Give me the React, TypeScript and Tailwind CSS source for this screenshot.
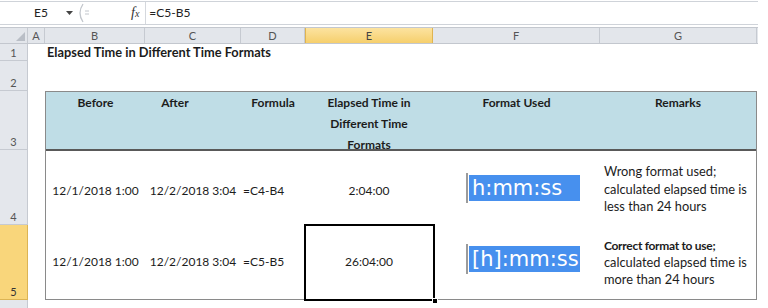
import React from 'react';

const SHEET_COLS = 'grid grid-cols-[28px_17px_100px_96px_64px_128px_167px_157px]';
const TABLE_COLS = 'grid grid-cols-[99px_96px_64px_128px_167px_156px]';

function RowHead({ label, className, active }: { label: string; className: string; active?: boolean }) {
  return (
    <div
      className={`${className} col-start-1 flex items-end justify-center pb-[2px] border-r border-b text-[11px] leading-none ${
        active ? 'bg-[#f9d67b] border-[#dcb454] text-[#333]' : 'bg-[#e4e7ec] border-[#c6cad1] text-[#555]'
      }`}
    >
      {label}
    </div>
  );
}

function FormatChip({ text, shift }: { text: string; shift: string }) {
  return (
    <div className={`flex items-center pl-[33px] ${shift}`}>
      <div className="w-[2px] h-[30px] bg-[#9b9b9b]" />
      <div className="ml-[1px] w-[111px] h-[26px] bg-[#4790ee] flex items-center pl-[3px] text-white text-[21px] leading-none font-['DejaVu_Sans',sans-serif]">
        {text}
      </div>
    </div>
  );
}

export default function App() {
  return (
    <div className="w-[768px] h-[308px] overflow-hidden bg-white font-['Lato',sans-serif] text-[12px] text-[#1c1c1c]">
      {/* Formula bar */}
      <div className="mt-[1px] w-[758px] h-[24px] border-y border-[#cfd3d9] flex items-center">
        <div className="w-[62px] pl-[34px] text-[#222]">E5</div>
        <svg width="7" height="4" className="ml-[4px]">
          <polygon points="0,0 7,0 3.5,4" fill="#444" />
        </svg>
        <svg width="14" height="20" className="ml-[4px]">
          <path d="M6 1 Q0 10 6 19" fill="none" stroke="#c2c6cc" strokeWidth="1.3" />
          <line x1="8" y1="8" x2="12" y2="8" stroke="#c2c6cc" />
          <line x1="8" y1="11" x2="12" y2="11" stroke="#c2c6cc" />
        </svg>
        <span className="ml-[40px] font-['Liberation_Serif',serif] italic text-[14px] text-[#333] leading-none">
          f<span className="text-[10px]">x</span>
        </span>
        <div className="ml-[6px] w-px h-[22px] bg-[#d5d8dd]" />
        <div className="pl-[3px] text-[#222]">=C5-B5</div>
      </div>

      {/* Column headers */}
      <div className={`${SHEET_COLS} mt-[2px] w-[758px] h-[17px] border-y border-[#c3c7ce] bg-[#e3e6eb] text-[11px] text-[#555] leading-[15px]`}>
        <div className="border-r border-[#c6cad1] flex items-end justify-end pr-[2px] pb-[2px]">
          <svg width="9" height="9">
            <polygon points="9,0 9,9 0,9" fill="#b9bec6" />
          </svg>
        </div>
        <div className="border-r border-[#c6cad1] text-center">A</div>
        <div className="border-r border-[#c6cad1] text-center">B</div>
        <div className="border-r border-[#c6cad1] text-center">C</div>
        <div className="border-r border-[#c6cad1] text-center">D</div>
        <div className="border-x border-[#dfb451] bg-linear-to-b from-[#fce3a0] to-[#f6cf6b] text-center text-[#444]">E</div>
        <div className="border-r border-[#c6cad1] text-center">F</div>
        <div className="border-r border-[#c6cad1] text-center">G</div>
      </div>

      {/* Sheet body */}
      <div className={`${SHEET_COLS} grid-rows-[17px_30px_59px_75px_75px_8px] w-[757px]`}>
        <RowHead label="1" className="row-start-1" />
        <RowHead label="2" className="row-start-2" />
        <RowHead label="3" className="row-start-3" />
        <RowHead label="4" className="row-start-4" />
        <RowHead label="5" className="row-start-5" active />
        <div className="row-start-6 col-start-1 bg-[#e4e7ec] border-r border-[#c6cad1]" />

        <div className="row-start-1 col-start-3 col-span-6 flex items-center pl-[2px] font-bold text-[12.8px]">
          Elapsed Time in Different Time Formats
        </div>

        {/* Table */}
        <div className="row-start-3 row-span-3 col-start-3 col-span-6 border border-[#8a8a8a] flex flex-col">
          <div className={`${TABLE_COLS} h-[59px] bg-[#bfdde6] border-b-2 border-[#595959] font-bold leading-[21px] text-center`}>
            <div>Before</div>
            <div className="pr-[36px]">After</div>
            <div>Formula</div>
            <div>
              Elapsed Time in
              <br />
              Different Time
              <br />
              Formats
            </div>
            <div>Format Used</div>
            <div>Remarks</div>
          </div>

          <div className={`${TABLE_COLS} h-[74px]`}>
            <div className="flex items-center justify-center pt-[6px]">12/1/2018 1:00</div>
            <div className="flex items-center justify-center pt-[6px]">12/2/2018 3:04</div>
            <div className="flex items-center pl-[2px] pt-[6px]">=C4-B4</div>
            <div className="flex items-center justify-center pt-[6px]">2:04:00</div>
            <FormatChip text="h:mm:ss" shift="pt-0" />
            <div className="flex flex-col justify-center pl-[4px] pt-[3px] leading-[17.5px] text-[12.8px]">
              <span>Wrong format used;</span>
              <span>calculated elapsed time is</span>
              <span>less than 24 hours</span>
            </div>
          </div>

          <div className={`${TABLE_COLS} h-[74px]`}>
            <div className="flex items-center justify-center">12/1/2018 1:00</div>
            <div className="flex items-center justify-center">12/2/2018 3:04</div>
            <div className="flex items-center pl-[2px]">=C5-B5</div>
            <div className="relative flex items-center justify-center">
              26:04:00
              <div className="absolute left-[-1px] top-[-1px] right-[-2px] bottom-[-2px] border-2 border-black pointer-events-none" />
              <div className="absolute right-[-5px] bottom-[-5px] w-[6px] h-[6px] bg-black border border-white" />
            </div>
            <FormatChip text="[h]:mm:ss" shift="pb-[6px]" />
            <div className="flex flex-col justify-center pl-[4px] leading-[17px] text-[12.8px]">
              <span className="font-bold text-[12px] tracking-[-0.3px]">Correct format to use;</span>
              <span>calculated elapsed time is</span>
              <span>more than 24 hours</span>
            </div>
          </div>
        </div>
      </div>
    </div>
  );
}
